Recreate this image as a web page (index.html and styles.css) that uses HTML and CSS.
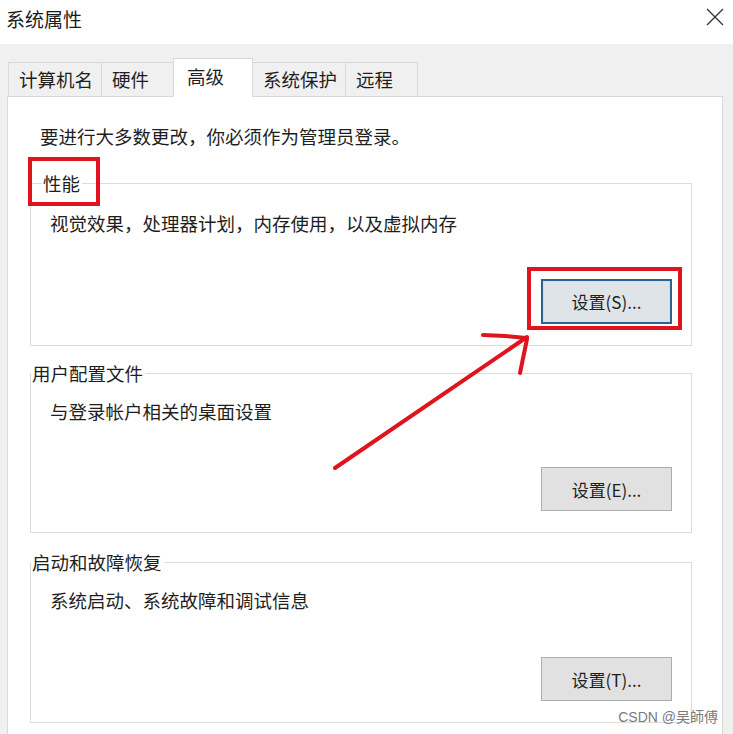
FILE: index.html
```html
<!DOCTYPE html>
<html lang="zh-CN">
<head>
<meta charset="utf-8">
<title>系统属性</title>
<link rel="stylesheet" href="styles.css">
</head>
<body>
<div class="window">
  <header class="titlebar">
    <span class="title">系统属性</span>
    <svg class="close" width="18" height="18" viewBox="0 0 18 18" aria-hidden="true">
      <path d="M1 1 L17 17 M17 1 L1 17" stroke="#333" stroke-width="1.3" fill="none"/>
    </svg>
  </header>
  <div class="client">
    <nav class="tabs">
      <div class="tab">计算机名</div>
      <div class="tab">硬件</div>
      <div class="tab tab-active">高级</div>
      <div class="tab">系统保护</div>
      <div class="tab">远程</div>
    </nav>
    <section class="panel">
      <p class="intro">要进行大多数更改，你必须作为管理员登录。</p>
      <fieldset class="group group-first">
        <legend class="legend legend-indent">性能</legend>
        <div class="group-body">
          <p class="desc">视觉效果，处理器计划，内存使用，以及虚拟内存</p>
          <div class="actions"><button class="btn btn-focus">设置(S)...</button></div>
        </div>
      </fieldset>
      <fieldset class="group">
        <legend class="legend">用户配置文件</legend>
        <div class="group-body">
          <p class="desc">与登录帐户相关的桌面设置</p>
          <div class="actions"><button class="btn">设置(E)...</button></div>
        </div>
      </fieldset>
      <fieldset class="group group-last">
        <legend class="legend">启动和故障恢复</legend>
        <div class="group-body">
          <p class="desc">系统启动、系统故障和调试信息</p>
          <div class="actions"><button class="btn">设置(T)...</button></div>
        </div>
      </fieldset>
    </section>
  </div>
  <div class="mark mark-legend"></div>
  <div class="mark mark-button"></div>
  <svg class="arrow" width="733" height="734" viewBox="0 0 733 734" aria-hidden="true">
    <path d="M335 468 L527 337" stroke="#e0141e" stroke-width="4" stroke-linecap="round" fill="none"/>
    <path d="M483 335 L505 336 L526 338" stroke="#e0141e" stroke-width="4" stroke-linecap="round" fill="none"/>
    <path d="M527 339 L520 373" stroke="#e0141e" stroke-width="4" stroke-linecap="round" fill="none"/>
  </svg>
  <div class="watermark">CSDN @吴師傅</div>
</div>
</body>
</html>
```

FILE: styles.css
```css
* { box-sizing: border-box; }

html, body {
  margin: 0;
  padding: 0;
  height: 734px;
  overflow: hidden;
}

body {
  font-family: "Noto Sans CJK SC", "Noto Sans", sans-serif;
  color: #1e1e1e;
  background: #f0f0f0;
}

.window {
  position: relative;
  width: 733px;
  height: 734px;
  display: flex;
  flex-direction: column;
}

.titlebar {
  height: 44px;
  flex: none;
  background: #ffffff;
  display: flex;
  justify-content: space-between;
  align-items: flex-start;
  padding: 7px 9px 0 6px;
}

.title {
  font-size: 19px;
  line-height: 24px;
  color: #1a1a1a;
}

.close {
  margin-top: 1px;
}

.client {
  flex: 1;
  display: flex;
  flex-direction: column;
  background: #f0f0f0;
}

.tabs {
  display: flex;
  align-items: flex-end;
  padding: 14px 0 0 8px;
}

.tab {
  height: 34px;
  min-width: 73px;
  padding: 0 8px 0 10px;
  border: 1px solid #d9d9d9;
  border-bottom: none;
  background: #f0f0f0;
  font-size: 18.5px;
  line-height: 33px;
  white-space: nowrap;
  margin-left: -1px;
}

.tab:first-child {
  margin-left: 0;
}

.tab-active {
  position: relative;
  z-index: 1;
  height: 39px;
  min-width: 80px;
  margin-bottom: -1px;
  padding-left: 13px;
  line-height: 34px;
  background: #ffffff;
}

.panel {
  flex: 1;
  margin: 0 10px 0 7px;
  background: #ffffff;
  border: 1px solid #d9d9d9;
  border-bottom: none;
  padding: 0 30px 0 22px;
}

.intro {
  margin: 27px 0 0 10px;
  font-size: 18.5px;
  line-height: 24px;
}

.group {
  margin: 16px 0 0;
  padding: 0;
  min-width: 0;
  border: 1px solid #dcdcdc;
}

.group-first {
  margin-top: 26px;
}

.group-last {
  margin-top: 18px;
}

.legend {
  font-size: 18.5px;
  line-height: 22px;
  padding: 0 2px 0 1px;
  margin-left: 0;
}

.legend-indent {
  margin-left: 11px;
  line-height: 18px;
}

.group-body {
  padding: 15px 19px 21px;
}

.group-first .group-body {
  padding-top: 19px;
}

.desc {
  margin: 0;
  font-size: 18.5px;
  line-height: 24px;
}

.actions {
  display: flex;
  justify-content: flex-end;
  margin-top: 44px;
}

.group-last .actions {
  margin-top: 45px;
}

.btn {
  width: 131px;
  height: 44px;
  border: 1px solid #adadad;
  background: #e1e1e1;
  font-family: "Noto Sans CJK SC", "Noto Sans", sans-serif;
  font-size: 17px;
  color: #1e1e1e;
  padding: 0;
}

.btn-focus {
  height: 45px;
  border: 2px solid #2a6592;
  box-shadow: inset 0 0 0 1px #c6e2f4;
  background: #dfe4e8;
}

.mark {
  position: absolute;
  border: 4px solid #e0141e;
}

.mark-legend {
  left: 28px;
  top: 157px;
  width: 72px;
  height: 49px;
}

.mark-button {
  left: 527px;
  top: 267px;
  width: 155px;
  height: 63px;
}

.arrow {
  position: absolute;
  left: 0;
  top: 0;
  pointer-events: none;
}

.watermark {
  position: absolute;
  right: 15px;
  bottom: 8px;
  font-family: "Liberation Sans", "Noto Sans CJK SC", sans-serif;
  font-size: 14px;
  line-height: 18px;
  color: #7a7a7a;
}
```
